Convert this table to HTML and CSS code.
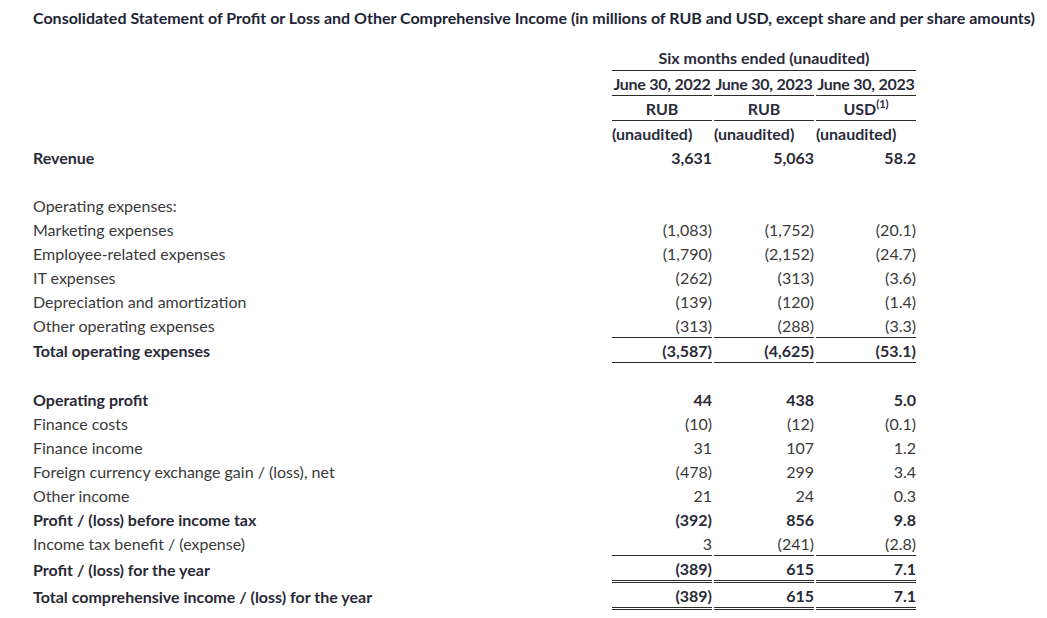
FILE: index.html
```html
<!DOCTYPE html>
<html>
<head>
<meta charset="utf-8">
<link rel="stylesheet" href="styles.css">
</head>
<body>
<div class="page">
  <h1 class="title">Consolidated Statement of Profit or Loss and Other Comprehensive Income (in millions of RUB and USD, except share and per share amounts)</h1>
  <table class="fin">
    <colgroup>
      <col class="c-label"><col class="c-num"><col class="c-num"><col class="c-num">
    </colgroup>
    <tbody>
      <tr class="hd"><td></td><td colspan="3" class="center line">Six months ended (unaudited)</td></tr>
      <tr class="hd dates"><td></td><td class="center line">June 30, 2022</td><td class="center line">June 30, 2023</td><td class="center line">June 30, 2023</td></tr>
      <tr class="hd"><td></td><td class="center line">RUB</td><td class="center line">RUB</td><td class="center line">USD<sup>(1)</sup></td></tr>
      <tr class="hd"><td></td><td>(unaudited)</td><td>(unaudited)</td><td>(unaudited)</td></tr>
      <tr class="b"><td>Revenue</td><td class="n">3,631</td><td class="n">5,063</td><td class="n">58.2</td></tr>
      <tr><td>&nbsp;</td><td></td><td></td><td></td></tr>
      <tr><td>Operating expenses:</td><td></td><td></td><td></td></tr>
      <tr><td>Marketing expenses</td><td class="n">(1,083)</td><td class="n">(1,752)</td><td class="n">(20.1)</td></tr>
      <tr><td>Employee-related expenses</td><td class="n">(1,790)</td><td class="n">(2,152)</td><td class="n">(24.7)</td></tr>
      <tr><td>IT expenses</td><td class="n">(262)</td><td class="n">(313)</td><td class="n">(3.6)</td></tr>
      <tr><td>Depreciation and amortization</td><td class="n">(139)</td><td class="n">(120)</td><td class="n">(1.4)</td></tr>
      <tr><td>Other operating expenses</td><td class="n line">(313)</td><td class="n line">(288)</td><td class="n line">(3.3)</td></tr>
      <tr class="b"><td>Total operating expenses</td><td class="n line">(3,587)</td><td class="n line">(4,625)</td><td class="n line">(53.1)</td></tr>
      <tr><td>&nbsp;</td><td></td><td></td><td></td></tr>
      <tr class="b"><td>Operating profit</td><td class="n">44</td><td class="n">438</td><td class="n">5.0</td></tr>
      <tr><td>Finance costs</td><td class="n">(10)</td><td class="n">(12)</td><td class="n">(0.1)</td></tr>
      <tr><td>Finance income</td><td class="n">31</td><td class="n">107</td><td class="n">1.2</td></tr>
      <tr><td>Foreign currency exchange gain / (loss), net</td><td class="n">(478)</td><td class="n">299</td><td class="n">3.4</td></tr>
      <tr><td>Other income</td><td class="n">21</td><td class="n">24</td><td class="n">0.3</td></tr>
      <tr class="b"><td>Profit / (loss) before income tax</td><td class="n">(392)</td><td class="n">856</td><td class="n">9.8</td></tr>
      <tr><td>Income tax benefit / (expense)</td><td class="n line">3</td><td class="n line">(241)</td><td class="n line">(2.8)</td></tr>
      <tr class="b"><td>Profit / (loss) for the year</td><td class="n dbl">(389)</td><td class="n dbl">615</td><td class="n dbl">7.1</td></tr>
      <tr class="b"><td>Total comprehensive income / (loss) for the year</td><td class="n dbl">(389)</td><td class="n dbl">615</td><td class="n dbl">7.1</td></tr>
    </tbody>
  </table>
</div>
</body>
</html>
```

FILE: styles.css
```css
html, body {
  margin: 0;
  padding: 0;
  background: #ffffff;
}

body {
  font-family: Lato, "Open Sans", Arial, sans-serif;
  font-size: 16px;
  color: #3a3a3a;
}

.page {
  padding: 8px 0 0 31px;
}

.title {
  margin: 0 0 17px 2px;
  font-size: 16px;
  line-height: 20px;
  font-weight: 700;
  color: #1e2535;
  white-space: nowrap;
}

.fin {
  border-collapse: separate;
  border-spacing: 2px 0;
  table-layout: fixed;
  width: 887px;
}

.c-label { width: 577px; }
.c-num { width: 100px; }

.fin td {
  padding: 0;
  height: 24px;
  line-height: 23px;
  white-space: nowrap;
  vertical-align: middle;
}

.fin tr.hd td {
  color: #2b2b3a;
  font-weight: 700;
}

.fin tr.dates td {
  letter-spacing: -0.25px;
}

.fin tr.hd:first-child td {
  height: 25px;
}

.fin tr.b td {
  font-weight: 700;
  color: #2a2a36;
}

.center { text-align: center; }
.n { text-align: right; }

.line { border-bottom: 1px solid #2b2b2b; }
.dbl { border-bottom: 3px double #2b2b2b; }

sup {
  font-size: 11px;
  line-height: 0;
  vertical-align: 7px;
}
```
